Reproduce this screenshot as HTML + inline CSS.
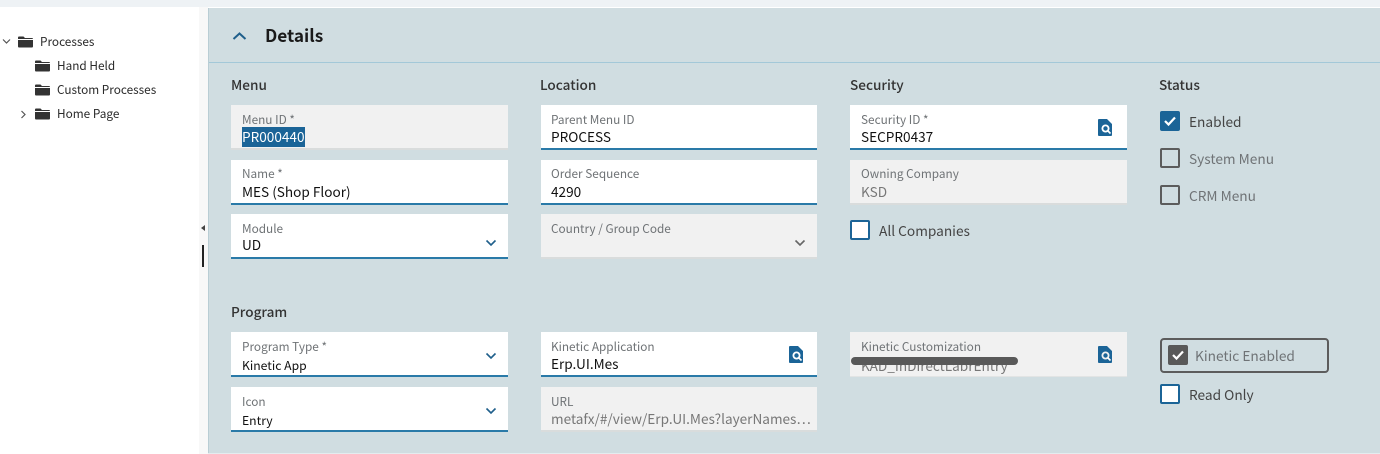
<!DOCTYPE html>
<html><head><meta charset="utf-8">
<style>
html,body{margin:0;padding:0;background:#fff}
#p{position:relative;width:1380px;height:454px;overflow:hidden;background:#fff;font-family:"Noto Sans CJK JP","Liberation Sans",sans-serif;color:#333}
#p div,#p span.a,#p svg{position:absolute}
.t{white-space:nowrap;line-height:20px;height:20px}
.f{background:#fff;border-bottom:2px solid #2a7aa8;box-sizing:border-box;width:277px;height:45px}
.f.d{background:#f1f1f1;border-bottom:2px solid #d9dcdc}
.l{left:11px;top:6px;font-size:11.8px;color:#6f7376;white-space:nowrap;line-height:18px}
.r2 .l{top:5px}
.v{left:11px;top:21px;font-size:13.6px;color:#111;white-space:nowrap;line-height:20px}
.d .v{color:#777}
.h{font-size:13.6px;font-weight:500;color:#333}
.n{font-size:11.8px;color:#2a2a2a}
.c{font-size:13.7px;color:#444}
.g{color:#6f7376!important}
.b{width:20px;height:20px;box-sizing:border-box;border-radius:2px;border:2px solid #5c5c5c}
.e .l{left:10px}.e .v{left:10px}
</style></head><body>
<div id="p">
<div style="left:0;top:0;width:1380px;height:7px;background:#eef2f5"></div>
<div style="left:199px;top:7px;width:9px;height:447px;background:#f8f8f8"></div>
<div style="left:208px;top:8px;width:1172px;height:445px;background:#d0dde1;border-left:1px solid #b9cdd4;box-sizing:border-box"></div>
<div style="left:208px;top:453px;width:1172px;height:1px;background:#e4ecef"></div>
<div style="left:209px;top:62px;width:1171px;height:1px;background:#a3c8d8"></div>

<!-- tree -->
<svg style="left:2px;top:38px" width="9" height="7" viewBox="0 0 9 7"><path d="M1 1.5L4.5 5L8 1.5" fill="none" stroke="#555" stroke-width="1.2"/></svg>
<svg style="left:18px;top:36px" width="15" height="12" viewBox="0 0 15 12"><path d="M0 1.5Q0 .5 1 .5H5.5L7 2H14Q15 2 15 3H0Z M0 4H15V10.5Q15 11.5 14 11.5H1Q0 11.5 0 10.5Z" fill="#333"/></svg>
<div class="t n" style="left:40px;top:32px">Processes</div>
<svg style="left:35px;top:60px" width="15" height="12" viewBox="0 0 15 12"><path d="M0 1.5Q0 .5 1 .5H5.5L7 2H14Q15 2 15 3H0Z M0 4H15V10.5Q15 11.5 14 11.5H1Q0 11.5 0 10.5Z" fill="#333"/></svg>
<div class="t n" style="left:57px;top:56px">Hand Held</div>
<svg style="left:35px;top:84px" width="15" height="12" viewBox="0 0 15 12"><path d="M0 1.5Q0 .5 1 .5H5.5L7 2H14Q15 2 15 3H0Z M0 4H15V10.5Q15 11.5 14 11.5H1Q0 11.5 0 10.5Z" fill="#333"/></svg>
<div class="t n" style="left:57px;top:80px">Custom Processes</div>
<svg style="left:20px;top:110px" width="7" height="9" viewBox="0 0 7 9"><path d="M1.5 1L5 4.5L1.5 8" fill="none" stroke="#555" stroke-width="1.2"/></svg>
<svg style="left:35px;top:108px" width="15" height="12" viewBox="0 0 15 12"><path d="M0 1.5Q0 .5 1 .5H5.5L7 2H14Q15 2 15 3H0Z M0 4H15V10.5Q15 11.5 14 11.5H1Q0 11.5 0 10.5Z" fill="#333"/></svg>
<div class="t n" style="left:57px;top:104px">Home Page</div>
<svg style="left:201px;top:225px" width="5" height="6" viewBox="0 0 5 6"><path d="M4 0V6L0 3Z" fill="#444"/></svg>
<div style="left:202px;top:245px;width:2px;height:22px;background:#222"></div>

<!-- header -->
<svg style="left:232px;top:31px" width="15" height="10" viewBox="0 0 15 10"><path d="M1.5 8L7.5 2.5L13.5 8" fill="none" stroke="#1f5f8b" stroke-width="2"/></svg>
<div class="t" style="left:265px;top:25px;font-size:17.2px;font-weight:700;color:#1a1a1a">Details</div>

<!-- section heads -->
<div class="t h" style="left:231px;top:74px">Menu</div>
<div class="t h" style="left:540px;top:74px">Location</div>
<div class="t h" style="left:850px;top:74px">Security</div>
<div class="t h" style="left:1159px;top:74px">Status</div>
<div class="t h" style="left:231px;top:301px">Program</div>

<!-- col1 -->
<div class="f d" style="left:231px;top:105px;height:45px"><div class="l">Menu ID *</div><div style="left:11px;top:22px;width:63px;height:20px;background:#1b6497"></div><div class="v" style="color:#fff">PR000440</div></div>
<div class="f r2" style="left:231px;top:160px"><div class="l">Name *</div><div class="v">MES (Shop Floor)</div></div>
<div class="f" style="left:231px;top:214px"><div class="l">Module</div><div class="v" style="top:20px">UD</div><svg style="left:254px;top:25px" width="12" height="8" viewBox="0 0 12 8"><path d="M1.5 1.5L6 6L10.5 1.5" fill="none" stroke="#1f5f8b" stroke-width="1.6"/></svg></div>

<!-- col2 -->
<div class="f e" style="left:541px;top:105px;width:276px"><div class="l">Parent Menu ID</div><div class="v">PROCESS</div></div>
<div class="f e r2" style="left:541px;top:160px;width:276px"><div class="l">Order Sequence</div><div class="v">4290</div></div>
<div class="f d e" style="left:541px;top:214px;width:276px"><div class="l">Country / Group Code</div><svg style="left:253px;top:25px" width="12" height="8" viewBox="0 0 12 8"><path d="M1.5 1.5L6 6L10.5 1.5" fill="none" stroke="#666" stroke-width="1.6"/></svg></div>

<!-- col3 -->
<div class="f" style="left:850px;top:105px"><div class="l">Security ID *</div><div class="v">SECPR0437</div>
<svg style="left:248px;top:14px" width="14" height="17" viewBox="0 0 14 17"><path fill-rule="evenodd" d="M1 0H9L14 5V16Q14 17 13 17H1Q0 17 0 16V1Q0 0 1 0Z M7.5 5.5A4 4 0 1 0 7.5 13.5A4 4 0 1 0 7.5 5.5Z M7.5 7.3A2.2 2.2 0 1 1 7.5 11.7A2.2 2.2 0 1 1 7.5 7.3Z" fill="#1b6497"/><path d="M10 12L12.5 14.5" stroke="#fff" stroke-width="1.6"/></svg></div>
<div class="f d r2" style="left:850px;top:160px"><div class="l">Owning Company</div><div class="v">KSD</div></div>
<div class="b" style="left:850px;top:220px;background:#fff;border-color:#1b6497"></div>
<div class="t c" style="left:879px;top:220px">All Companies</div>

<!-- status -->
<div class="b" style="left:1160px;top:111px;background:#1b6497;border-color:#1b6497"><svg style="left:1px;top:2px" width="14" height="12" viewBox="0 0 14 12"><path d="M2 6L5.5 9.5L12 2.5" fill="none" stroke="#fff" stroke-width="2.2"/></svg></div>
<div class="t c" style="left:1189px;top:111px">Enabled</div>
<div class="b" style="left:1160px;top:148px"></div>
<div class="t c g" style="left:1189px;top:148px">System Menu</div>
<div class="b" style="left:1160px;top:185px"></div>
<div class="t c g" style="left:1189px;top:185px">CRM Menu</div>

<!-- program row -->
<div class="f" style="left:231px;top:332px"><div class="l">Program Type *</div><div class="v" style="font-size:12.2px;top:23px">Kinetic App</div><svg style="left:254px;top:20px" width="12" height="8" viewBox="0 0 12 8"><path d="M1.5 1.5L6 6L10.5 1.5" fill="none" stroke="#1f5f8b" stroke-width="1.6"/></svg></div>
<div class="f" style="left:231px;top:387px"><div class="l">Icon</div><div class="v" style="font-size:12.2px;top:23px">Entry</div><svg style="left:254px;top:20px" width="12" height="8" viewBox="0 0 12 8"><path d="M1.5 1.5L6 6L10.5 1.5" fill="none" stroke="#1f5f8b" stroke-width="1.6"/></svg></div>
<div class="f e" style="left:541px;top:332px;width:276px"><div class="l">Kinetic Application</div><div class="v">Erp.UI.Mes</div>
<svg style="left:248px;top:14px" width="14" height="17" viewBox="0 0 14 17"><path fill-rule="evenodd" d="M1 0H9L14 5V16Q14 17 13 17H1Q0 17 0 16V1Q0 0 1 0Z M7.5 5.5A4 4 0 1 0 7.5 13.5A4 4 0 1 0 7.5 5.5Z M7.5 7.3A2.2 2.2 0 1 1 7.5 11.7A2.2 2.2 0 1 1 7.5 7.3Z" fill="#1b6497"/><path d="M10 12L12.5 14.5" stroke="#fff" stroke-width="1.6"/></svg></div>
<div class="f d e" style="left:541px;top:387px;width:276px"><div class="l">URL</div><div class="v">metafx/#/view/Erp.UI.Mes?layerNames…</div></div>
<div class="f d" style="left:850px;top:332px;height:45px;border-bottom:1px solid #e2e4e4"><div class="l">Kinetic Customization</div><div class="v" style="font-size:13.6px;top:23px">KAD_InDirectLabrEntry</div>
<svg style="left:248px;top:14px" width="14" height="17" viewBox="0 0 14 17"><path fill-rule="evenodd" d="M1 0H9L14 5V16Q14 17 13 17H1Q0 17 0 16V1Q0 0 1 0Z M7.5 5.5A4 4 0 1 0 7.5 13.5A4 4 0 1 0 7.5 5.5Z M7.5 7.3A2.2 2.2 0 1 1 7.5 11.7A2.2 2.2 0 1 1 7.5 7.3Z" fill="#1b6497"/><path d="M10 12L12.5 14.5" stroke="#fff" stroke-width="1.6"/></svg></div>
<div style="left:851px;top:357px;width:167px;height:8px;border-radius:4px;background:#595959"></div>

<div style="left:1160px;top:338px;width:169px;height:35px;box-sizing:border-box;border:2px solid #5c5c5c;border-radius:4px"></div>
<div class="b" style="left:1168px;top:345px;background:#595959;border-color:#595959"><svg style="left:1px;top:2px" width="14" height="12" viewBox="0 0 14 12"><path d="M2 6L5.5 9.5L12 2.5" fill="none" stroke="#fff" stroke-width="2.2"/></svg></div>
<div class="t c g" style="left:1195px;top:345px">Kinetic Enabled</div>
<div class="b" style="left:1160px;top:384px;background:#fff;border-color:#1b6497"></div>
<div class="t c" style="left:1189px;top:384px">Read Only</div>
</div>
</body></html>
